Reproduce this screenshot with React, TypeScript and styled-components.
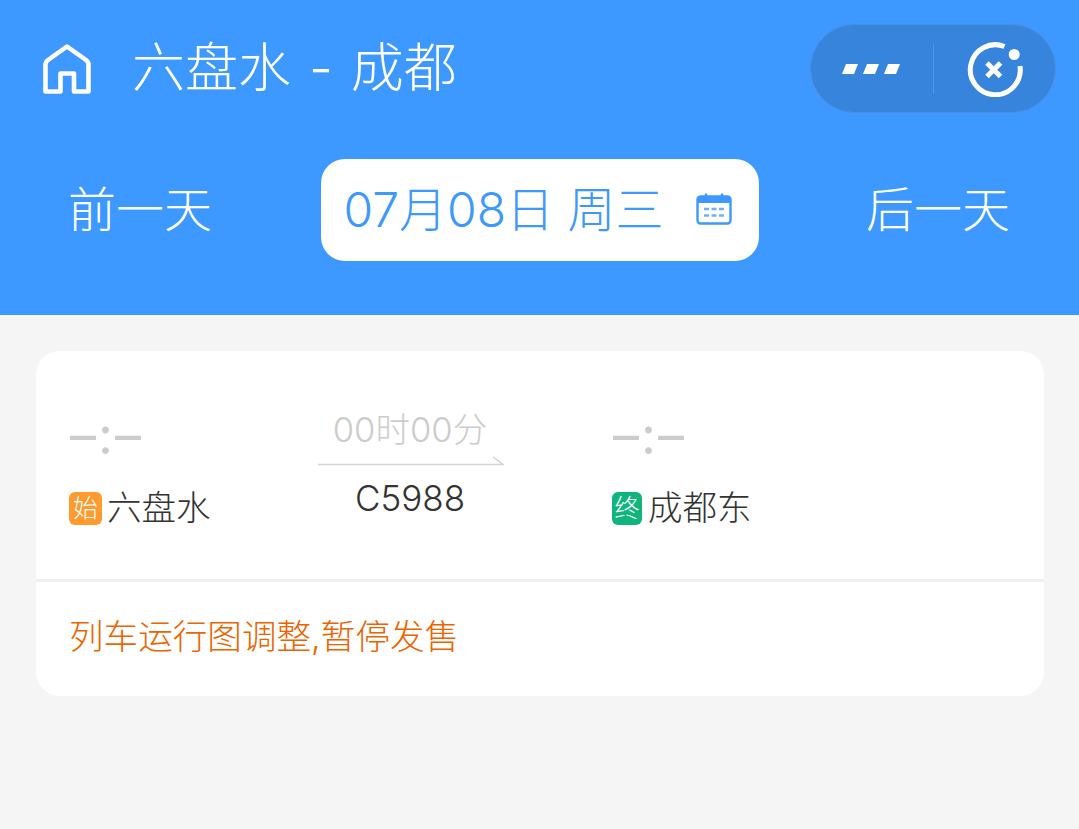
import React from 'react'
import styled, { createGlobalStyle } from 'styled-components'

const FONT = `Inter, "Noto Sans CJK SC", sans-serif`

const GlobalStyle = createGlobalStyle`
  html, body {
    margin: 0;
    padding: 0;
    height: 100%;
    overflow: hidden;
    background: #f5f5f5;
    font-family: ${FONT};
  }
`

const Page = styled.div`
  width: 1079px;
  height: 829px;
  background: #f5f5f5;
`

const Header = styled.header`
  height: 315px;
  box-sizing: border-box;
  padding-top: 24px;
  background: #3d98ff;
  color: #fff;
`

const NavBar = styled.div`
  height: 89px;
  display: flex;
  align-items: center;
  padding: 0 23px 0 40px;
`

const Title = styled.h1`
  flex: 1;
  margin: 0 0 0 38px;
  font-size: 53px;
  font-weight: 300;
  line-height: 89px;
  word-spacing: 3px;
`

const Capsule = styled.div`
  width: 246px;
  height: 89px;
  box-sizing: border-box;
  display: flex;
  align-items: center;
  border: 1px solid #4a8fdf;
  border-radius: 45px;
  background: #3784dc;
`

const CapsuleSlot = styled.div`
  flex: 1;
  display: flex;
  align-items: center;
  justify-content: center;
`

const CapsuleDivider = styled.div`
  width: 1px;
  height: 50px;
  background: #4f95e4;
`

const DateRow = styled.div`
  margin-top: 46px;
  height: 102px;
  display: flex;
  align-items: center;
  justify-content: space-between;
  padding: 0 69px 0 68px;
`

const DayLink = styled.span`
  width: 144px;
  padding-bottom: 8px;
  font-size: 48px;
  font-weight: 300;
`

const DatePill = styled.div`
  width: 438px;
  height: 102px;
  box-sizing: border-box;
  margin-left: 38px;
  margin-right: 37px;
  padding: 0 27px 0 23px;
  display: flex;
  align-items: center;
  justify-content: space-between;
  background: #fff;
  border-radius: 24px;
  color: #3d98ff;
  font-size: 48px;
  font-weight: 300;
  white-space: pre;
`

const DateText = styled.span`
  padding-bottom: 8px;
`

const Content = styled.main`
  padding: 36px 35px 0 36px;
`

const Card = styled.section`
  background: #fff;
  border-radius: 24px;
  overflow: hidden;
`

const TrainRow = styled.div`
  height: 231px;
  box-sizing: border-box;
  border-bottom: 3px solid #eeeeee;
  padding: 0 33px;
  display: flex;
`

const Stop = styled.div<{ $width: number }>`
  width: ${p => p.$width}px;
  display: flex;
  flex-direction: column;
  padding-top: 56px;
`

const TimeText = styled.div`
  height: 58px;
  padding-left: 1px;
  font-size: 52px;
  line-height: 58px;
  letter-spacing: 2px;
  color: #cccccc;
  font-weight: 400;
`

const Station = styled.div<{ $gap: number }>`
  margin-top: 19px;
  display: flex;
  align-items: center;
  gap: ${p => p.$gap}px;
  font-size: 34.5px;
  line-height: 48px;
  font-weight: 300;
  color: #333;
`

const Badge = styled.span<{ $color: string; $width: number }>`
  width: ${p => p.$width}px;
  height: 33px;
  border-radius: 6px;
  background: ${p => p.$color};
  color: #fff;
  font-size: 25px;
  line-height: 33px;
  text-align: center;
  font-weight: 300;
`

const Middle = styled.div`
  width: 186px;
  margin-right: 108px;
  padding-top: 55px;
  display: flex;
  flex-direction: column;
  align-items: center;
`

const Duration = styled.div`
  height: 50px;
  padding-right: 2px;
  font-size: 34.6px;
  line-height: 46px;
  font-weight: 300;
  color: #cccccc;
`

const Train = styled.div`
  margin-top: 8px;
  padding-right: 2px;
  font-size: 35px;
  line-height: 48px;
  font-weight: 300;
  color: #333;
`

const Notice = styled.div`
  height: 114px;
  box-sizing: border-box;
  padding: 31px 33px 0;
  font-size: 34.6px;
  line-height: 46px;
  font-weight: 300;
  color: #ec6400;
`

const HomeIcon = () => (
  <svg width="54" height="54" viewBox="0 0 54 54" fill="none" stroke="#fff" strokeWidth="4.6" strokeLinejoin="round">
    <path d="M5.5 49.5 V22.5 Q5.5 20 8 18 L27 4.5 L46 18 Q48.5 20 48.5 22.5 V49.5 H34 V31.5 H20.5 V49.5 Z" />
  </svg>
)

const MoreIcon = () => (
  <svg width="60" height="10" viewBox="0 0 60 10" fill="#fff">
    <polygon points="4,0 16,0 12,10 0,10" />
    <polygon points="25,0 37,0 33,10 21,10" />
    <polygon points="46,0 58,0 54,10 42,10" />
  </svg>
)

const CloseIcon = () => (
  <svg width="58" height="56" viewBox="0 0 58 56" fill="none" stroke="#fff">
    <path d="M39.5 5.5 A25 25 0 1 0 55 25" strokeWidth="5" />
    <circle cx="49.2" cy="13.5" r="5.5" fill="#fff" stroke="none" />
    <path d="M22 22 L35.5 35.5 M35.5 22 L22 35.5" strokeWidth="5" />
  </svg>
)

const ArrowLine = () => (
  <svg width="186" height="10" viewBox="0 0 186 10" fill="none" stroke="#d4d4d4" strokeWidth="1.5" style={{ display: 'block' }}>
    <path d="M0 8.5 H185 L175 1" />
  </svg>
)

const CalendarIcon = () => (
  <svg width="36" height="32" viewBox="0 0 36 32" fill="none" style={{ marginBottom: 3 }}>
    <rect x="1.5" y="3.5" width="33" height="27" rx="3" stroke="#3d98ff" strokeWidth="2.4" />
    <path d="M1.5 6.5 Q1.5 3.5 4.5 3.5 H31.5 Q34.5 3.5 34.5 6.5 V10 H1.5 Z" fill="#3d98ff" />
    <path d="M10 0.5 V5 M26 0.5 V5" stroke="#3d98ff" strokeWidth="2.4" />
    <path d="M8 16 H13 M15.5 16 H20.5 M23 16 H28 M8 22.5 H13 M15.5 22.5 H20.5 M23 22.5 H28" stroke="#6fb0fa" strokeWidth="2.6" />
  </svg>
)

export default function App() {
  return (
    <Page>
      <GlobalStyle />
      <Header>
        <NavBar>
          <HomeIcon />
          <Title>六盘水 - 成都</Title>
          <Capsule>
            <CapsuleSlot><MoreIcon /></CapsuleSlot>
            <CapsuleDivider />
            <CapsuleSlot><CloseIcon /></CapsuleSlot>
          </Capsule>
        </NavBar>
        <DateRow>
          <DayLink>前一天</DayLink>
          <DatePill>
            <DateText>07月08日 周三</DateText>
            <CalendarIcon />
          </DatePill>
          <DayLink>后一天</DayLink>
        </DateRow>
      </Header>
      <Content>
        <Card>
          <TrainRow>
            <Stop $width={249}>
              <TimeText>–:–</TimeText>
              <Station $gap={5}>
                <Badge $color="#ff9a2e" $width={33}>始</Badge>
                六盘水
              </Station>
            </Stop>
            <Middle>
              <Duration>00时00分</Duration>
              <ArrowLine />
              <Train>C5988</Train>
            </Middle>
            <Stop $width={200}>
              <TimeText>–:–</TimeText>
              <Station $gap={6}>
                <Badge $color="#0fb57a" $width={30}>终</Badge>
                成都东
              </Station>
            </Stop>
          </TrainRow>
          <Notice>列车运行图调整,暂停发售</Notice>
        </Card>
      </Content>
    </Page>
  )
}
